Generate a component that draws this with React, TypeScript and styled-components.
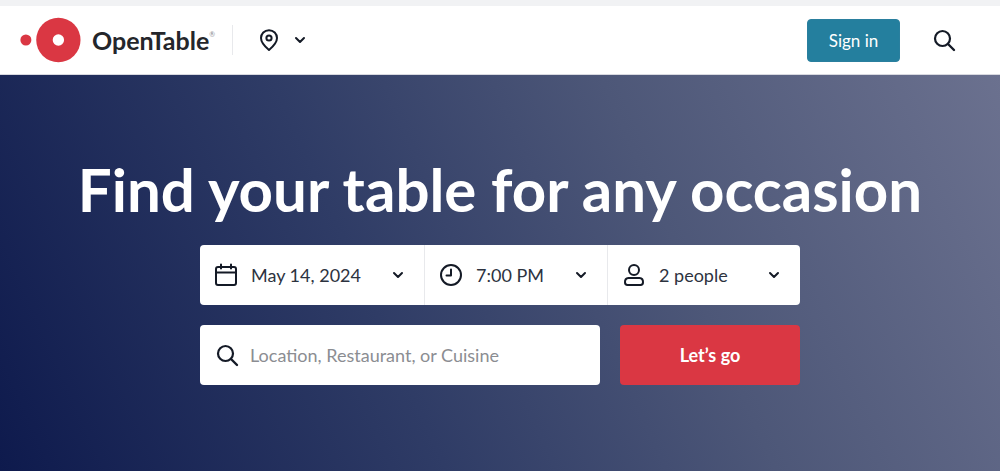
import React from 'react';
import styled, { createGlobalStyle } from 'styled-components';

const GlobalStyle = createGlobalStyle`
  html, body {
    margin: 0;
    padding: 0;
    background: #fff;
  }
  body {
    font-family: 'Lato', 'Noto Sans', sans-serif;
  }
`;

const Chevron = () => (
  <ChevronSvg viewBox="0 0 12 12">
    <path d="M2 4l4 4 4-4" fill="none" stroke="#141a26" strokeWidth="2" strokeLinecap="round" strokeLinejoin="round" />
  </ChevronSvg>
);

const Logo = () => (
  <LogoSvg viewBox="0 0 64 46">
    <circle cx="7" cy="23" r="5.6" fill="#da3743" />
    <circle cx="40" cy="23" r="22.5" fill="#da3743" />
    <circle cx="40" cy="23" r="5.8" fill="#fff" />
  </LogoSvg>
);

const SearchIcon = () => (
  <IconSvg viewBox="0 0 24 24">
    <circle cx="10.5" cy="10.5" r="7.5" fill="none" stroke="#141a26" strokeWidth="2.2" />
    <path d="M16 16l6 6" fill="none" stroke="#141a26" strokeWidth="2.4" strokeLinecap="round" />
  </IconSvg>
);

const PinIcon = () => (
  <IconSvg viewBox="0 0 24 24">
    <path d="M12 2.2c-4.6 0-8 3.4-8 7.8 0 3.4 3 7.8 8 12 5-4.2 8-8.6 8-12 0-4.4-3.4-7.8-8-7.8z" fill="none" stroke="#141a26" strokeWidth="2" strokeLinejoin="round" />
    <circle cx="12" cy="10" r="2.6" fill="none" stroke="#141a26" strokeWidth="2" />
  </IconSvg>
);

const CalendarIcon = () => (
  <IconSvg viewBox="0 0 24 24">
    <rect x="2" y="4" width="20" height="18" rx="2" fill="none" stroke="#141a26" strokeWidth="2" />
    <path d="M2 9.5h20M7 1.5v4M17 1.5v4" fill="none" stroke="#141a26" strokeWidth="2" strokeLinecap="round" />
  </IconSvg>
);

const ClockIcon = () => (
  <IconSvg viewBox="0 0 24 24">
    <circle cx="12" cy="12" r="10" fill="none" stroke="#141a26" strokeWidth="2" />
    <path d="M12 6.5V12.5H7.5" fill="none" stroke="#141a26" strokeWidth="2" strokeLinecap="round" strokeLinejoin="round" />
  </IconSvg>
);

const PersonIcon = () => (
  <IconSvg viewBox="0 0 24 24">
    <circle cx="12" cy="7" r="5" fill="none" stroke="#141a26" strokeWidth="2" />
    <path d="M6.5 15h11a4 4 0 0 1 3.5 4.2c0 1.8-1 2.8-2.5 2.8h-13C4 22 3 21 3 19.2A4 4 0 0 1 6.5 15z" fill="none" stroke="#141a26" strokeWidth="2" strokeLinejoin="round" />
  </IconSvg>
);

export default function App() {
  return (
    <>
      <GlobalStyle />
      <Page>
        <TopStrip />
        <Header>
          <Brand>
            <Logo />
            <BrandName>
              OpenTable<BrandMark>®</BrandMark>
            </BrandName>
          </Brand>
          <LocationButton>
            <PinIcon />
            <Chevron />
          </LocationButton>
          <HeaderRight>
            <SignIn>Sign in</SignIn>
            <SearchButton>
              <SearchIcon />
            </SearchButton>
          </HeaderRight>
        </Header>
        <Hero>
          <Title>Find your table for any occasion</Title>
          <Form>
            <Pickers>
              <Picker $width={224}>
                <CalendarIcon />
                <PickerLabel>May 14, 2024</PickerLabel>
                <Chevron />
              </Picker>
              <Picker $width={183}>
                <ClockIcon />
                <PickerLabel>7:00 PM</PickerLabel>
                <Chevron />
              </Picker>
              <Picker $width={193}>
                <PersonIcon />
                <PickerLabel>2 people</PickerLabel>
                <Chevron />
              </Picker>
            </Pickers>
            <SearchRow>
              <SearchField>
                <SearchIcon />
                <Placeholder>Location, Restaurant, or Cuisine</Placeholder>
              </SearchField>
              <GoButton>Let’s go</GoButton>
            </SearchRow>
          </Form>
        </Hero>
      </Page>
    </>
  );
}

const Page = styled.div`
  width: 1000px;
  height: 471px;
  display: flex;
  flex-direction: column;
  overflow: hidden;
`;

const TopStrip = styled.div`
  height: 6px;
  background: #f1f2f4;
`;

const Header = styled.header`
  height: 68px;
  display: flex;
  align-items: center;
  padding: 0 44px 0 19px;
  background: #fff;
  border-bottom: 1px solid #d8d9e0;
`;

const Brand = styled.div`
  display: flex;
  align-items: center;
  gap: 10px;
  height: 30px;
  width: 213px;
  border-right: 1px solid #e8e9ec;
`;

const LogoSvg = styled.svg`
  width: 63px;
  height: 46px;
  flex: none;
`;

const BrandName = styled.span`
  position: relative;
  font-size: 25px;
  font-weight: 700;
  color: #24262b;
  letter-spacing: 0;
`;

const BrandMark = styled.span`
  position: absolute;
  top: 5px;
  left: 100%;
  font-size: 7px;
  font-weight: 400;
  color: #8b8d92;
`;

const LocationButton = styled.div`
  display: flex;
  align-items: center;
  gap: 13px;
  margin-left: 24px;
`;

const HeaderRight = styled.div`
  margin-left: auto;
  display: flex;
  align-items: center;
  gap: 32px;
`;

const SignIn = styled.button`
  width: 93px;
  height: 43px;
  border: 1px solid #2a7f9e;
  border-radius: 4px;
  background: #247f9e;
  color: #fff;
  font-family: inherit;
  font-size: 17px;
  font-weight: 400;
`;

const SearchButton = styled.div`
  display: flex;
  align-items: center;
`;

const IconSvg = styled.svg`
  width: 24px;
  height: 24px;
  flex: none;
`;

const ChevronSvg = styled.svg`
  width: 12px;
  height: 12px;
  flex: none;
`;

const Hero = styled.main`
  flex: 1;
  display: flex;
  flex-direction: column;
  align-items: center;
  padding-top: 78px;
  background: linear-gradient(66deg, #0e1a4d 0%, #2f3c66 38%, #4d5778 66%, #6b718f 100%);
`;

const Title = styled.h1`
  margin: 0;
  font-size: 60px;
  line-height: 72px;
  font-weight: 700;
  color: #fff;
  white-space: nowrap;
`;

const Form = styled.div`
  width: 600px;
  margin-top: 20px;
  display: flex;
  flex-direction: column;
  gap: 20px;
`;

const Pickers = styled.div`
  height: 60px;
  display: flex;
  background: #fff;
  border-radius: 4px;
`;

const Picker = styled.div<{ $width: number }>`
  width: ${(p) => p.$width}px;
  box-sizing: border-box;
  display: flex;
  align-items: center;
  padding: 0 20px 0 14px;
  gap: 13px;
  & + & {
    border-left: 1px solid #e8e9ec;
  }
`;

const PickerLabel = styled.span`
  flex: 1;
  font-size: 18px;
  color: #2d333f;
`;

const SearchRow = styled.div`
  display: flex;
  gap: 20px;
`;

const SearchField = styled.div`
  width: 400px;
  height: 60px;
  box-sizing: border-box;
  display: flex;
  align-items: center;
  gap: 11px;
  padding-left: 15px;
  background: #fff;
  border-radius: 4px;
`;

const Placeholder = styled.span`
  font-size: 18px;
  color: #8b8d92;
`;

const GoButton = styled.button`
  flex: 1;
  height: 60px;
  border: none;
  border-radius: 4px;
  background: #da3743;
  color: #fff;
  font-family: inherit;
  font-size: 18px;
  font-weight: 700;
`;
